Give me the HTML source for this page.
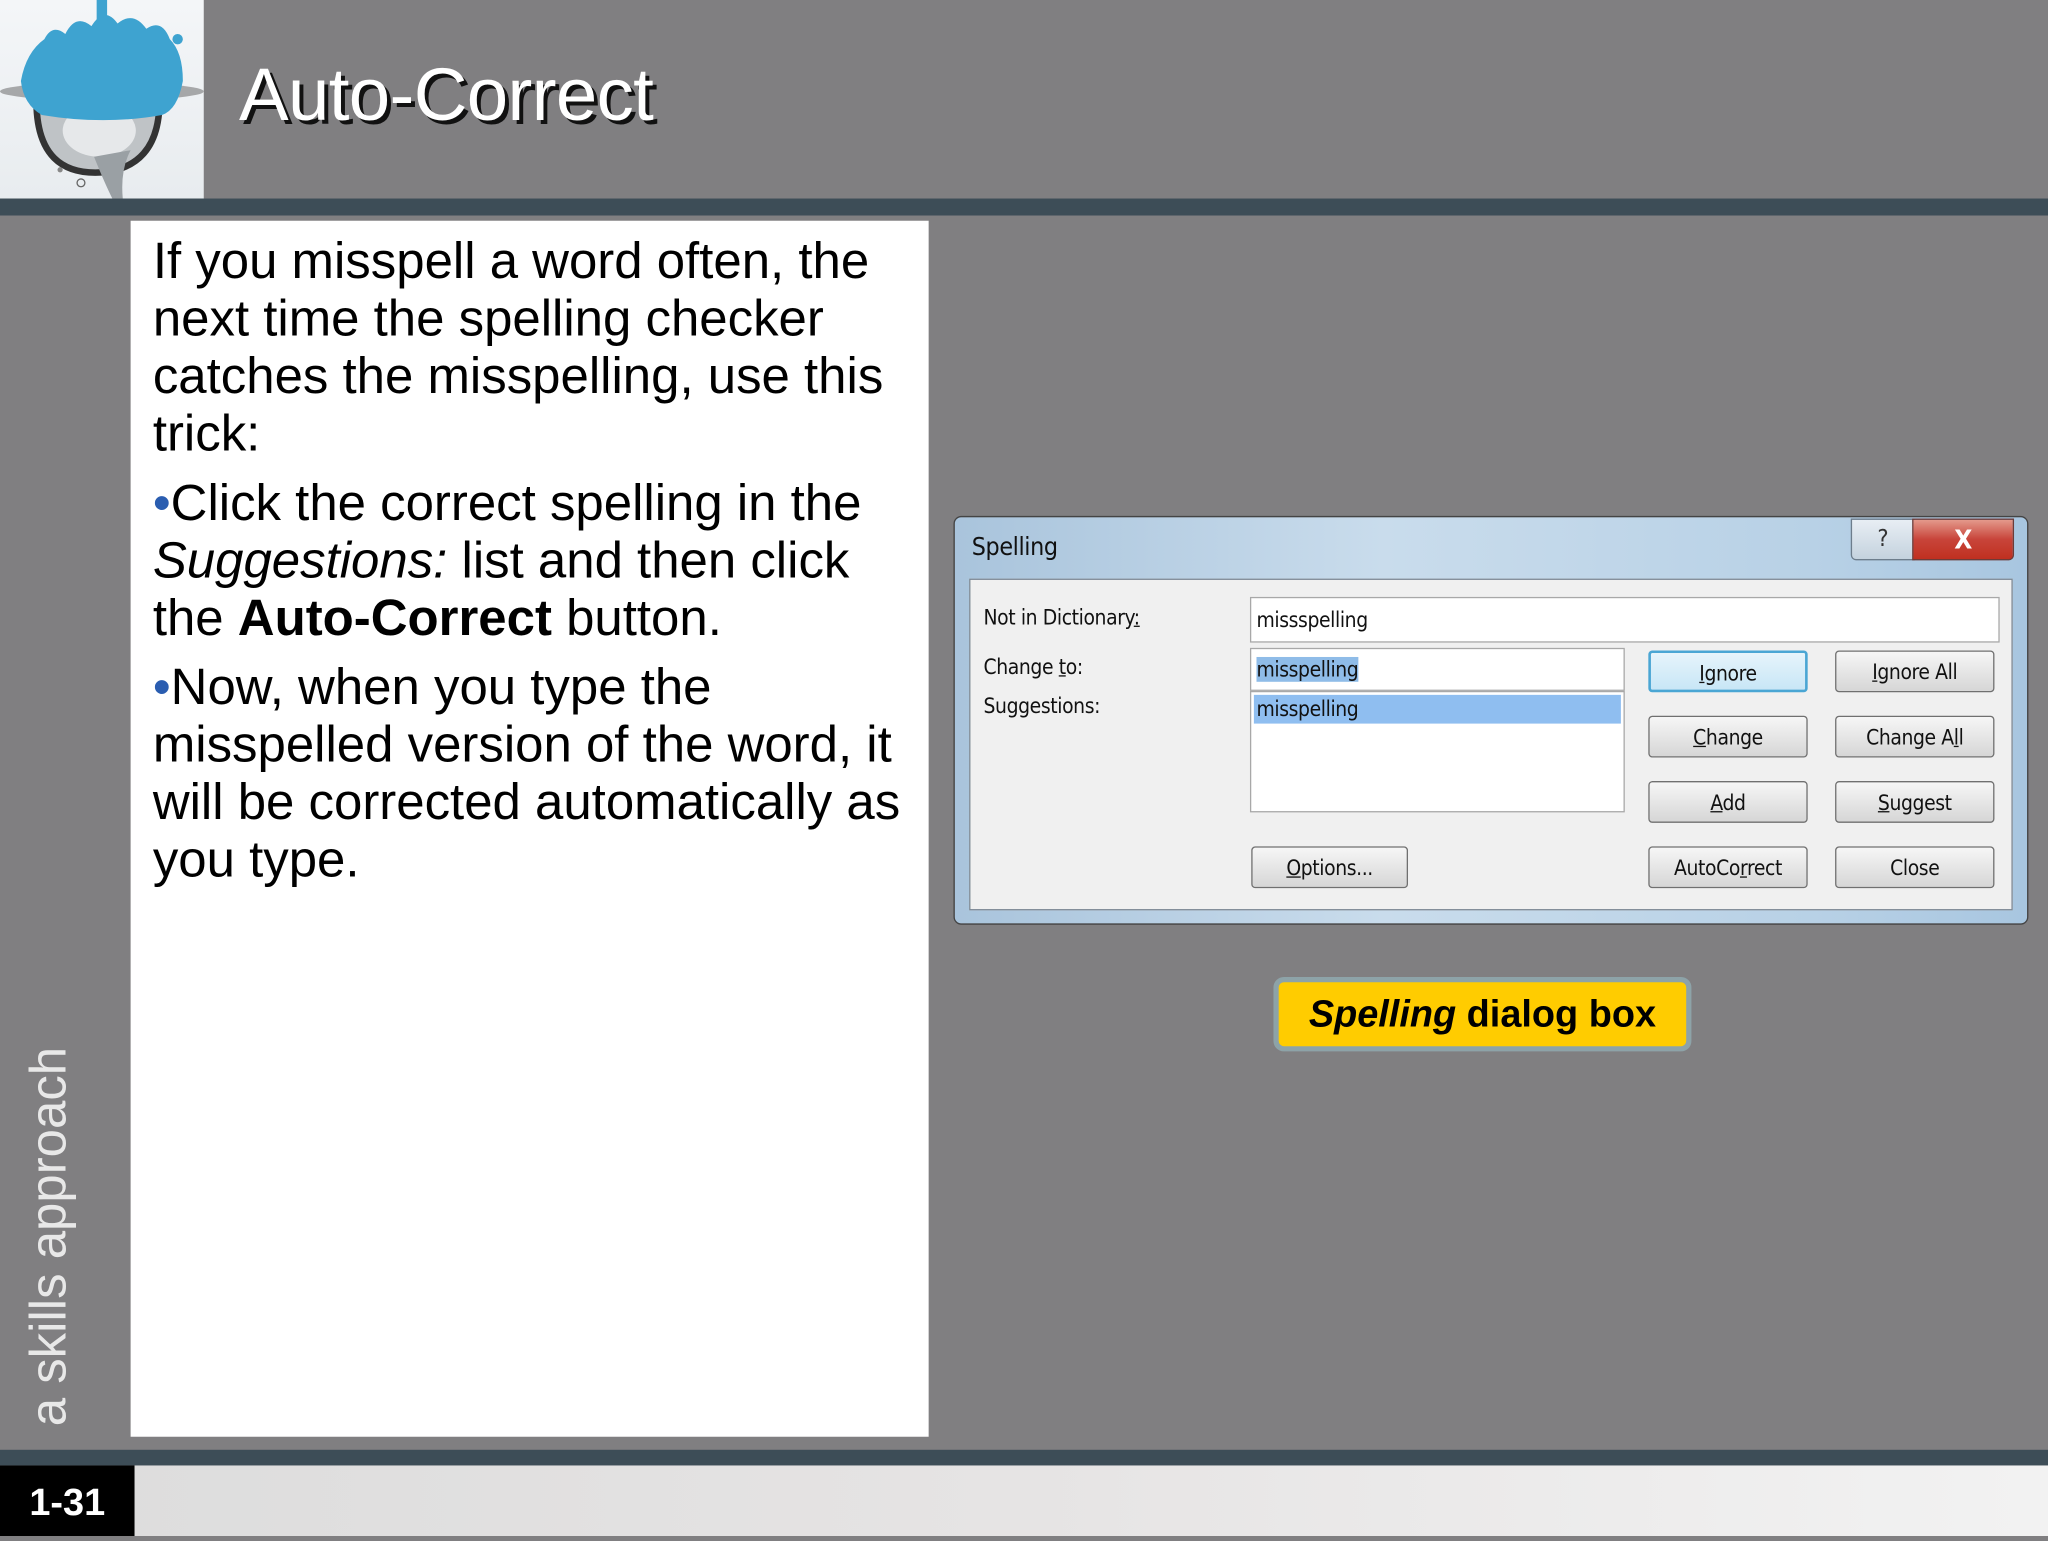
<!DOCTYPE html>
<html><head><meta charset="utf-8"><style>
html,body{margin:0;padding:0;width:2048px;height:1536px;overflow:hidden;background:#807f81}
#s{position:absolute;left:0;top:0;width:1568px;height:1176px;transform:scale(1.306122);transform-origin:0 0;background:#807f81;font-family:"Liberation Sans",Arial,sans-serif}
.a{position:absolute}
.body p{margin:0}
.dlg{font-family:"DejaVu Sans Condensed","DejaVu Sans",sans-serif;font-size:16px;color:#111;letter-spacing:-0.3px}
.btn{position:absolute;width:122px;height:32px;border:1px solid #707070;border-radius:3px;background:linear-gradient(#f6f6f6,#e6e6e6 50%,#d6d6d6);text-align:center;line-height:32px;box-sizing:border-box}
.fld{position:absolute;background:#fff;border:1px solid #a8a8a8;box-sizing:border-box}
</style></head><body><div id="s">
<div class="a" style="left:0;top:0;width:1568px;height:152px;background:#807f81"></div>
<div class="a" style="left:0;top:0;width:156px;height:152px;background:linear-gradient(#f4f6f8,#e8ecef)">
<svg width="156" height="152" viewBox="0 0 156 152">
<ellipse cx="78" cy="70" rx="78" ry="7" fill="#777" opacity=".6"/>
<path d="M28 82 Q30 135 78 132 Q120 128 122 82 Z" fill="#bfc3c6" stroke="#333" stroke-width="5"/>
<ellipse cx="76" cy="100" rx="28" ry="20" fill="#e6e8ea"/>
<path d="M72 120 Q80 140 86 152 L94 152 Q92 130 100 115 Z" fill="#9aa0a4"/>
<path d="M16 62 Q20 40 34 30 Q40 18 50 26 Q58 10 70 20 Q80 4 90 18 Q102 8 112 22 Q124 14 130 30 Q140 40 140 62 Q136 84 124 88 Q80 96 32 88 Q18 80 16 62 Z" fill="#3ea3d0"/>
<rect x="74" y="0" width="8" height="16" fill="#3ea3d0"/>
<circle cx="136" cy="30" r="4" fill="#3ea3d0"/><circle cx="62" cy="140" r="3" fill="none" stroke="#666"/><circle cx="46" cy="130" r="2" fill="#888"/>
</svg></div>
<div class="a" style="left:183px;top:40px;font-size:57px;color:#fff;text-shadow:3px 3px 0 #111;letter-spacing:-0.5px">Auto-Correct</div>
<div class="a" style="left:0;top:152px;width:1568px;height:13px;background:#3d4d57"></div>
<div class="a body" style="left:100px;top:169px;width:611px;height:931px;background:#fff"></div>
<div class="a body" style="left:117px;top:179px;width:590px;font-size:39px;line-height:44px;color:#000">
<p>If you misspell a word often, the next time the spelling checker catches the misspelling, use this trick:</p>
<p style="margin-top:9px"><span style="color:#2a5db0">•</span>Click the correct spelling in the <i>Suggestions:</i> list and then click the <b>Auto-Correct</b> button.</p>
<p style="margin-top:9px"><span style="color:#2a5db0">•</span>Now, when you type the misspelled version of the word, it will be corrected automatically as you type.</p>
</div>
<div class="a" style="left:16px;top:1092px;transform:rotate(-90deg);transform-origin:0 0;font-size:39px;color:#e8e8e8;white-space:nowrap">a skills approach</div>
<div class="a dlg" style="left:730px;top:395px;width:823px;height:313px;border:1px solid #444;border-radius:6px;box-sizing:border-box;background:linear-gradient(90deg,#a9c4dc,#c9dcec 40%,#b8d1e6 80%,#a8c6e0)">
<div class="a" style="left:13px;top:12px;font-size:19px">Spelling</div>
<div class="a" style="left:686px;top:1px;width:47px;height:30px;border:1px solid #6d7d8c;border-radius:0 0 0 4px;background:linear-gradient(#e8eef4,#c4d2de);text-align:center;line-height:30px;font-size:18px;color:#333">?</div>
<div class="a" style="left:733px;top:1px;width:76px;height:30px;border:1px solid #6d3b38;border-radius:0 0 4px 0;background:linear-gradient(#e49a8c,#c8443a 50%,#c03020);text-align:center;line-height:30px;font-size:20px;color:#fff;font-weight:bold">X</div>
<div class="a" style="left:11px;top:47px;width:799px;height:254px;background:#f0f0f0;border:1px solid #7c8894;box-sizing:border-box">
<div class="a" style="left:10px;top:19px">Not in Dictionary<u>:</u></div>
<div class="a" style="left:10px;top:57px">Change <u>t</u>o:</div>
<div class="a" style="left:10px;top:87px">Suggestions:</div>
<div class="fld" style="left:214px;top:13px;width:574px;height:35px;line-height:33px;padding-left:4px">missspelling</div>
<div class="fld" style="left:214px;top:52px;width:287px;height:33px;line-height:31px;padding-left:4px"><span style="background:#8fbce8">misspelling</span></div>
<div class="fld" style="left:214px;top:85px;width:287px;height:93px;padding:2px"><div style="background:#8fbef0;height:22px;line-height:22px;padding-left:2px">misspelling</div></div>
<div class="btn" style="left:519px;top:54px;border:2px solid #4aa6d4;background:linear-gradient(#e6f4fb,#c8e6f6)"><u>I</u>gnore</div>
<div class="btn" style="left:662px;top:54px"><u>I</u>gnore All</div>
<div class="btn" style="left:519px;top:104px"><u>C</u>hange</div>
<div class="btn" style="left:662px;top:104px">Change A<u>l</u>l</div>
<div class="btn" style="left:519px;top:154px"><u>A</u>dd</div>
<div class="btn" style="left:662px;top:154px"><u>S</u>uggest</div>
<div class="btn" style="left:215px;top:204px;width:120px"><u>O</u>ptions...</div>
<div class="btn" style="left:519px;top:204px">AutoCo<u>r</u>rect</div>
<div class="btn" style="left:662px;top:204px">Close</div>
</div></div>
<div class="a" style="left:975px;top:748px;width:320px;height:57px;box-sizing:border-box;border:4px solid #8da3a8;border-radius:8px;background:#ffcc00;text-align:center;line-height:51px;font-size:29px;font-weight:bold;color:#000"><i>Spelling</i> dialog box</div>
<div class="a" style="left:0;top:1110px;width:1568px;height:12px;background:#3d4d57"></div>
<div class="a" style="left:0;top:1122px;width:1568px;height:54px;background:linear-gradient(90deg,#dcdcdc,#e6e4e4 50%,#f2f2f2)"></div>
<div class="a" style="left:0;top:1122px;width:103px;height:54px;background:#000;color:#fff;font-weight:bold;font-size:29px;text-align:center;line-height:58px">1-31</div>
</div></body></html>
